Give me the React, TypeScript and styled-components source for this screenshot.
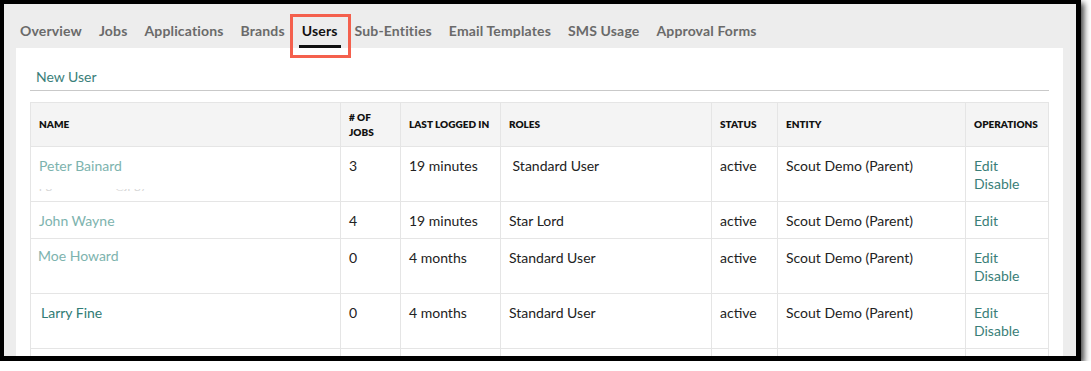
import React from 'react';
import styled, {createGlobalStyle} from 'styled-components';

const GlobalStyle = createGlobalStyle`
  html, body {
    margin: 0;
    padding: 0;
    background: #ffffff;
  }
  body {
    font-family: Lato, "Open Sans", "Liberation Sans", sans-serif;
    color: #222;
  }
`;

type User = {
  name: string;
  tone: 'light' | 'dark';
  jobs: number;
  lastLogin: string;
  role: string;
  status: string;
  entity: string;
  ops: string[];
  note?: string;
  shift?: number;
};

const tabs = [
  'Overview',
  'Jobs',
  'Applications',
  'Brands',
  'Users',
  'Sub-Entities',
  'Email Templates',
  'SMS Usage',
  'Approval Forms',
];

const columns = [
  {label: 'Name', width: 310},
  {label: '# of jobs', width: 60},
  {label: 'Last logged in', width: 100},
  {label: 'Roles', width: 211},
  {label: 'Status', width: 66},
  {label: 'Entity', width: 188},
  {label: 'Operations', width: 83},
];

const users: User[] = [
  {
    name: 'Peter Bainard',
    tone: 'light',
    jobs: 3,
    lastLogin: '19 minutes',
    role: '\u00a0Standard User',
    status: 'active',
    entity: 'Scout Demo (Parent)',
    ops: ['Edit', 'Disable'],
    note: 'pgeter.bainard@jpgy.com',
  },
  {
    name: 'John Wayne',
    tone: 'light',
    jobs: 4,
    lastLogin: '19 minutes',
    role: 'Star Lord',
    status: 'active',
    entity: 'Scout Demo (Parent)',
    ops: ['Edit'],
  },
  {
    name: 'Moe Howard',
    tone: 'light',
    jobs: 0,
    lastLogin: '4 months',
    role: 'Standard User',
    status: 'active',
    entity: 'Scout Demo (Parent)',
    ops: ['Edit', 'Disable'],
    shift: -1,
  },
  {
    name: 'Larry Fine',
    tone: 'dark',
    jobs: 0,
    lastLogin: '4 months',
    role: 'Standard User',
    status: 'active',
    entity: 'Scout Demo (Parent)',
    ops: ['Edit', 'Disable'],
    shift: 2,
  },
];

export default function App() {
  return (
    <>
      <GlobalStyle />
      <Frame>
        <TabBar>
          {tabs.map(t => (
            <Tab key={t} $active={t === 'Users'}>
              {t}
              {t === 'Users' && <Callout />}
            </Tab>
          ))}
        </TabBar>
        <Panel>
          <Toolbar>
            <Link href="#">New User</Link>
          </Toolbar>
          <Table>
            <colgroup>
              {columns.map(c => (
                <col key={c.label} style={{width: c.width}} />
              ))}
            </colgroup>
            <thead>
              <tr>
                {columns.map(c => (
                  <Th key={c.label}>
                    {c.label === '# of jobs' ? (
                      <>
                        # of
                        <br />
                        jobs
                      </>
                    ) : (
                      c.label
                    )}
                  </Th>
                ))}
              </tr>
            </thead>
            <tbody>
              {users.map(u => (
                <tr key={u.name}>
                  <Td>
                    <NameLink href="#" $tone={u.tone} $shift={u.shift ?? 0}>
                      {u.name}
                    </NameLink>
                    {u.note && (
                      <Faint>
                        <span>{u.note}</span>
                      </Faint>
                    )}
                  </Td>
                  <Td>{u.jobs}</Td>
                  <Td>{u.lastLogin}</Td>
                  <Td>{u.role}</Td>
                  <Td>{u.status}</Td>
                  <Td>{u.entity}</Td>
                  <Td>
                    {u.ops.map(op => (
                      <OpLink key={op} href="#">
                        {op}
                      </OpLink>
                    ))}
                  </Td>
                </tr>
              ))}
              <EmptyRow>
                {columns.map(c => (
                  <Td key={c.label} />
                ))}
              </EmptyRow>
            </tbody>
          </Table>
        </Panel>
      </Frame>
    </>
  );
}

const Frame = styled.div`
  box-sizing: border-box;
  width: 1081px;
  height: 361px;
  display: flex;
  flex-direction: column;
  overflow: hidden;
  background: #ededed;
  border: solid #000;
  border-width: 4px 5px 5px 4px;
  box-shadow: 3px 3px 6px rgba(0, 0, 0, 0.75);
  padding: 0 13px 0 12px;
`;

const TabBar = styled.div`
  position: relative;
  z-index: 1;
  height: 44px;
  display: flex;
  align-items: flex-end;
  gap: 11px;
  padding-left: 1px;
  flex-shrink: 0;
`;

const Tab = styled.div<{$active?: boolean}>`
  position: relative;
  padding: 0 3px 5px;
  line-height: 18px;
  font-size: 14px;
  font-weight: 700;
  letter-spacing: 0.15px;
  color: ${p => (p.$active ? '#111' : '#6a6a6a')};
  border-bottom: 3px solid ${p => (p.$active ? '#111' : 'transparent')};
  white-space: nowrap;
`;

const Callout = styled.span`
  position: absolute;
  top: -8px;
  left: -9px;
  right: -10px;
  bottom: -13px;
  border: 3px solid #f4604d;
  pointer-events: none;
`;

const Panel = styled.div`
  flex: 1;
  background: #fff;
  padding: 19px 14px 0;
`;

const Toolbar = styled.div`
  padding: 0 6px 4px;
  border-bottom: 1px solid #c9c9c9;
  margin-bottom: 11px;
  line-height: 18px;
`;

const Link = styled.a`
  color: #3b807a;
  font-size: 14px;
  text-decoration: none;
`;

const Table = styled.table`
  width: 1018px;
  table-layout: fixed;
  border-collapse: collapse;
  border: 1px solid #e5e5e5;
`;

const Th = styled.th`
  height: 43px;
  padding: 0 8px;
  background: #f4f4f4;
  border: 1px solid #e5e5e5;
  text-align: left;
  vertical-align: middle;
  font-size: 10px;
  line-height: 15px;
  font-weight: 800;
  text-transform: uppercase;
  color: #111;
  white-space: nowrap;
`;

const Td = styled.td`
  padding: 10px 8px 8px;
  border: 1px solid #e5e5e5;
  vertical-align: top;
  font-size: 14px;
  line-height: 18px;
  color: #222;
  white-space: nowrap;
`;

const EmptyRow = styled.tr`
  height: 37px;
`;

const NameLink = styled.a<{$tone: 'light' | 'dark'; $shift: number}>`
  display: block;
  position: relative;
  top: ${p => Math.min(p.$shift, 0) * 2}px;
  left: ${p => p.$shift}px;
  color: ${p => (p.$tone === 'light' ? '#7db3ae' : '#2f7b75')};
  text-decoration: none;
`;

const Faint = styled.div`
  height: 18px;
  overflow: hidden;
  span {
    display: block;
    margin-top: 1px;
    color: #d4d4d4;
    font-size: 12px;
    clip-path: inset(13px 0 0 0);
  }
`;

const OpLink = styled.a`
  display: block;
  color: #3a7e78;
  text-decoration: none;
`;
